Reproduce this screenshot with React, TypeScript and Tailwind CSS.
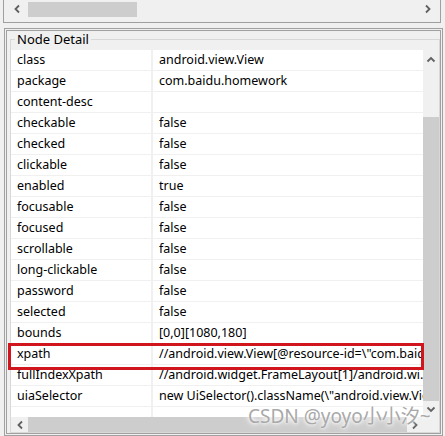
import React from "react";

const rows: [string, string][] = [
  ["class", "android.view.View"],
  ["package", "com.baidu.homework"],
  ["content-desc", ""],
  ["checkable", "false"],
  ["checked", "false"],
  ["clickable", "false"],
  ["enabled", "true"],
  ["focusable", "false"],
  ["focused", "false"],
  ["scrollable", "false"],
  ["long-clickable", "false"],
  ["password", "false"],
  ["selected", "false"],
  ["bounds", "[0,0][1080,180]"],
  ["xpath", '//android.view.View[@resource-id=\\"com.baidu.homework:id/title_bar\\"]'],
  ["fullIndexXpath", "//android.widget.FrameLayout[1]/android.wi.."],
  ["uiaSelector", 'new UiSelector().className(\\"android.view.View\\").resourceId(\\"com.baidu.homework\\")'],
  ["", ""],
];

const Arrow = ({ dir }: { dir: "left" | "right" | "up" | "down" }) => {
  const pts = {
    left: "6,1.5 2.5,5 6,8.5",
    right: "3,1.5 6.5,5 3,8.5",
    up: "1.5,6.5 5,3 8.5,6.5",
    down: "1.5,3.5 5,7 8.5,3.5",
  }[dir];
  return (
    <svg width="10" height="10" viewBox="0 0 10 10">
      <polyline points={pts} fill="none" stroke="#606060" strokeWidth="1.8" />
    </svg>
  );
};

const App = () => {
  return (
    <div className="relative flex h-[436px] w-[445px] flex-col overflow-hidden bg-[#f0f0f0] font-['Noto_Sans','Noto_Sans_CJK_SC',sans-serif] text-[12px] text-black">
      {/* upper panel, only its scrollbar shows */}
      <div className="ml-[3px] mr-[4px] h-[23px] shrink-0 border-x border-b border-[#a0a0a0]">
        <div className="flex h-[17px] items-center">
          <div className="flex w-[24px] justify-center pl-[4px]">
            <Arrow dir="left" />
          </div>
          <div className="mt-[2px] h-[15px] w-[109px] bg-[#cdcdcd]" />
          <div className="flex-1" />
          <div className="flex w-[24px] justify-center">
            <Arrow dir="right" />
          </div>
        </div>
      </div>

      {/* lower panel */}
      <div className="ml-[4px] mr-[2px] mt-[5px] flex-1 border border-[#a0a0a0] p-px">
        <div className="h-full border border-[#a0a0a0] pl-[3px] pr-px">
          <fieldset className="border border-[#d8d8d8]">
            <legend className="ml-[4px] px-[2px] text-[13px] leading-[16px]">Node Detail</legend>
            <div className="mt-[3px] flex h-[367px]">
              <div className="w-[412px] overflow-hidden bg-white">
                {rows.map(([k, v], i) => (
                  <div key={i} className="flex h-[21px] border-b border-[#f0f0f0]">
                    <div className="w-[142px] shrink-0 border-r-2 border-[#f0f0f0] pl-[6px] text-[12.5px] leading-[20px]">
                      {k}
                    </div>
                    <div className="min-w-0 flex-1 overflow-hidden whitespace-nowrap pl-[6px] text-[12.5px] leading-[20px]">
                      {v}
                    </div>
                  </div>
                ))}
              </div>
              <div className="flex w-[16px] flex-col items-center bg-[#f0f0f0]">
                <div className="flex h-[19px] items-center">
                  <Arrow dir="up" />
                </div>
                <div className="mt-[48px] h-[284px] w-full bg-[#cdcdcd]" />
                <div className="flex flex-1 items-center">
                  <Arrow dir="down" />
                </div>
              </div>
            </div>
            <div className="flex h-[15px] w-[412px] items-center bg-[#f0f0f0]">
              <div className="flex w-[17px] justify-center pl-[2px]">
                <Arrow dir="left" />
              </div>
              <div className="h-[15px] w-[379px] bg-[#cdcdcd]" />
              <div className="flex flex-1 justify-center">
                <Arrow dir="right" />
              </div>
            </div>
          </fieldset>
        </div>
      </div>

      {/* annotation */}
      <div className="absolute left-[8px] top-[343px] h-[27px] w-[416px] border-[3px] border-[#d0161c]" />

      {/* watermark */}
      <div className="absolute left-[248px] top-[402px] whitespace-nowrap text-[19px] text-[#a9a9a9] [text-shadow:0_0_3px_#fff,0_0_5px_#fff,0_0_8px_#fff]">
        CSDN @yoyo小小汐~
      </div>
    </div>
  );
};

export default App;
